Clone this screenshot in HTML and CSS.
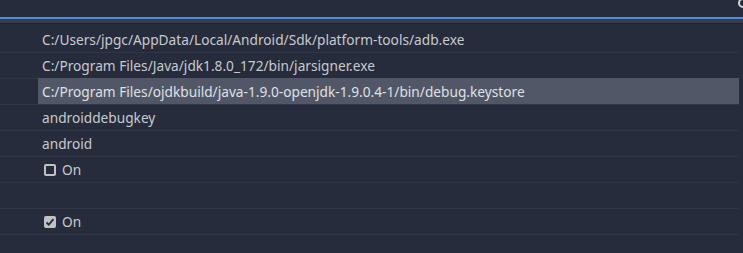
FILE: index.html
```html
<!DOCTYPE html>
<html>
<head>
<meta charset="utf-8">
<link rel="stylesheet" href="styles.css">
</head>
<body>
<div class="topbar">
  <svg class="search" width="14" height="14" viewBox="0 0 14 14"><circle cx="6" cy="4" r="4" fill="none" stroke="#d4d6da" stroke-width="2"/><path d="M9 7 L12 10" stroke="#d4d6da" stroke-width="2"/></svg>
</div>
<div class="accent"></div>
<div class="band"></div>
<div class="edge"></div>
<div class="list">
  <div class="row"><div class="value">C:/Users/jpgc/AppData/Local/Android/Sdk/platform-tools/adb.exe</div></div>
  <div class="row"><div class="value">C:/Program Files/Java/jdk1.8.0_172/bin/jarsigner.exe</div></div>
  <div class="row"><div class="value selected">C:/Program Files/ojdkbuild/java-1.9.0-openjdk-1.9.0.4-1/bin/debug.keystore</div></div>
  <div class="row"><div class="value">androiddebugkey</div></div>
  <div class="row"><div class="value">android</div></div>
  <div class="row"><div class="value check"><span class="box"></span>On</div></div>
  <div class="row"><div class="value"></div></div>
  <div class="row"><div class="value check"><span class="box checked"><svg width="12" height="12" viewBox="0 0 12 12"><path d="M2.5 6.5 L4.8 8.6 L9.5 3.2" fill="none" stroke="#262c3b" stroke-width="1.8"/></svg></span>On</div></div>
</div>
</body>
</html>
```
FILE: styles.css
```css
html, body {
  margin: 0;
  padding: 0;
  background: #262c3b;
  overflow: hidden;
  width: 743px;
  height: 253px;
}
body {
  font-family: "Noto Sans", sans-serif;
  font-size: 13.7px;
  color: #c8cace;
}
.topbar {
  height: 17px;
  display: flex;
  justify-content: flex-end;
  align-items: flex-start;
  overflow: hidden;
}
.search {
  margin-right: -8px;
  margin-top: -1px;
  flex: none;
}
.accent {
  height: 2px;
  background: #4a8de6;
}
.band {
  height: 4px;
  background: #353c4e;
}
.edge {
  height: 1px;
  background: #1e2330;
}
.list {
  padding-top: 3px;
  width: 739px;
}
.row {
  height: 25px;
  border-bottom: 1px solid #2f3546;
  display: flex;
}
.value {
  flex: 1;
  margin-left: 38px;
  padding-left: 4px;
  display: flex;
  align-items: center;
  line-height: 25px;
  white-space: nowrap;
}
.selected {
  background: #515767;
  color: #dfe1e4;
  margin-top: -1px;
  height: 26px;
}
.check {
  padding-left: 6px;
}
.box {
  width: 8px;
  height: 8px;
  border: 2px solid #bfc1c5;
  border-radius: 2px;
  margin-right: 6px;
  position: relative;
  top: 0px;
}
.box.checked {
  background: #bfc1c5;
  display: flex;
  align-items: center;
  justify-content: center;
}
.box.checked svg {
  flex: none;
}
```
